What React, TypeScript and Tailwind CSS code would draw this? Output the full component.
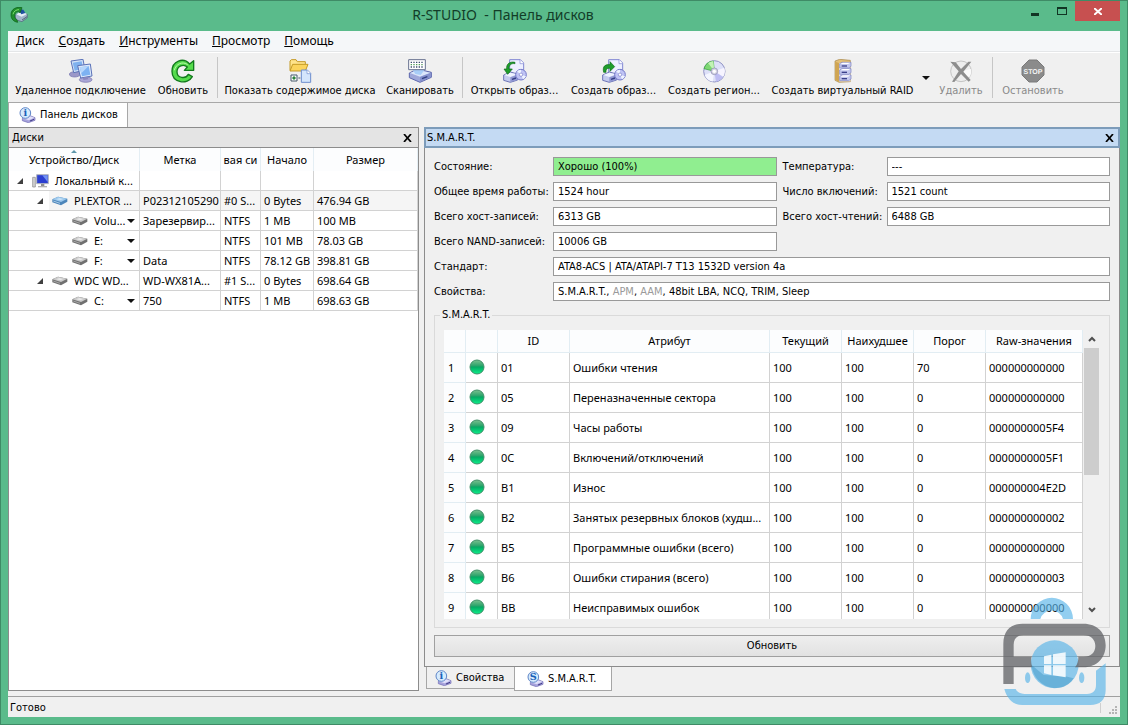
import React from 'react';
import clsx from 'clsx';

type IconProps = { className?: string };

const AppIcon = () => (
  <svg width="18" height="16" viewBox="0 0 54 48" className="shrink-0">
    <path d="M16 24 34 14l18 8v10L36 44 16 38z" fill="#9fb4c8" stroke="#4a6076" strokeWidth="2" />
    <path d="m18 22 17-9 16 8-16 8z" fill="#e4eef6" />
    <path d="m24 6 16 2 6 10-12 4z" fill="#1e4fa0" />
    <path d="M36 2C20-2 2 6 3 24c0 12 8 20 20 22l-2-8c-8-4-10-16-2-22l7-3 4 5z" fill="#1f8f2c" stroke="#0e5c18" strokeWidth="2" />
    <path d="M9 22c2-10 10-14 18-14" stroke="#7fdb6d" strokeWidth="3" fill="none" />
    <path d="m36 39 15-10" stroke="#2c3e50" strokeWidth="2" />
  </svg>
);

const RemoteIcon = ({ className }: IconProps) => (
  <svg width="24" height="24" viewBox="0 0 72 72" className={className}>
    <ellipse cx="17" cy="46" rx="16" ry="8" fill="#9b98c9" stroke="#6f6cab" strokeWidth="2" />
    <ellipse cx="50" cy="62" rx="19" ry="8" fill="#aaa6d6" stroke="#6f6cab" strokeWidth="2" />
    <path d="m6 6 36-5 6 32-34 8z" fill="#d3e3f8" stroke="#5b72b8" strokeWidth="3" />
    <path d="m11 11 27-4 4 22-25 6z" fill="#7fb1ee" />
    <path d="m26 20 38-5 5 36-34 6z" fill="#dce9fb" stroke="#5b72b8" strokeWidth="3" />
    <path d="m32 25 27-4 5 26-25 5z" fill="#7db2f2" />
    <path d="m32 25 27-4-22 22z" fill="#b6d6fb" />
    <path d="m40 56 16-3 2 8-14 2z" fill="#8b88bf" />
  </svg>
);

const RefreshIcon = ({ className }: IconProps) => (
  <svg width="24" height="24" viewBox="0 0 72 72" className={className}>
    <path
      d="M56 15 68 5v29H40l9-10C38 14 18 20 18 38c0 20 26 23 34 8l12 7C50 78 3 73 3 37 3 5 37-6 56 15z"
      fill="#55dc4c"
      stroke="#127a1c"
      strokeWidth="4"
      strokeLinejoin="round"
    />
    <path d="M10 34C14 14 36 6 50 17" stroke="#b4f7a4" strokeWidth="3" fill="none" />
  </svg>
);

const FolderTreeIcon = ({ className }: IconProps) => (
  <svg width="24" height="24" viewBox="0 0 72 72" className={className}>
    <path d="M6 34V6l4-4h14l4 6h24v8" fill="#ffe48a" stroke="#c49a26" strokeWidth="3" />
    <path d="m6 36 8-20h46l-8 20z" fill="#fbd45c" stroke="#c49a26" strokeWidth="3" />
    <path d="M9 48h18v18H9z" fill="#fff" stroke="#44596b" strokeWidth="3" />
    <path d="M18 52v10M13 57h10" stroke="#1b7a2d" strokeWidth="4" />
    <path d="M40 33h18l10 10v27H40z" fill="#d4e6fc" stroke="#6b8dce" strokeWidth="3" />
    <path d="M57 33v11h11" fill="#fff" stroke="#6b8dce" strokeWidth="2" />
    <path d="M31 57h6" stroke="#44596b" strokeWidth="3" />
  </svg>
);

const ScanIcon = ({ className }: IconProps) => (
  <svg width="24" height="24" viewBox="0 0 72 72" className={className}>
    <path d="m4 42 24-12 42 10v15L36 70 4 56z" fill="#9fa8da" stroke="#5c66ac" strokeWidth="3" />
    <path d="m6 42 23-10 38 9-31 12z" fill="#dbe6fa" />
    <path d="M36 54v14l32-13V42z" fill="#8490cd" />
    <path d="m42 59 16-6" stroke="#323f80" strokeWidth="4" />
    <path d="m12 30 38 2-12 16-16-3z" fill="#a8cdf7" />
    <path d="M2 2h50v30H2z" fill="#fff" stroke="#66708e" strokeWidth="3" />
    <path d="M8 10h40" stroke="#3e4d70" strokeWidth="4" strokeDasharray="4 4" />
    <path d="M8 17h40" stroke="#519c59" strokeWidth="4" strokeDasharray="4 4" />
    <path d="M8 24h40" stroke="#3e4d70" strokeWidth="4" strokeDasharray="4 4" />
  </svg>
);

// Shared sheet + drive + disc drawing behind both image arrows
const ImageBase = () => (
  <>
    <path d="M20 2h32l10 10v36H20z" fill="#eef0ff" stroke="#8086d2" strokeWidth="3" />
    <path d="M51 2v12h12" fill="#fff" stroke="#8086d2" strokeWidth="2" />
    <path d="m2 48 20-9 22 6v18L22 70 2 64z" fill="#c4cbee" stroke="#6d74b6" strokeWidth="3" />
    <path d="m4 48 18-7 20 5-20 8z" fill="#eef2ff" />
    <path d="M22 55v14l22-7V47z" fill="#8f97d2" />
    <path d="m27 61 12-4" stroke="#343c84" strokeWidth="4" />
    <circle cx="54" cy="47" r="16" fill="#bfc3f4" stroke="#7479c8" strokeWidth="3" />
    <path d="M54 47 42 37a16 16 0 0 1 12-5zM54 47l15 5a16 16 0 0 1-9 9z" fill="#eef3ff" />
    <circle cx="54" cy="47" r="5" fill="#fff" stroke="#7479c8" strokeWidth="2" />
  </>
);

const OpenImageIcon = ({ className }: IconProps) => (
  <svg width="24" height="24" viewBox="0 0 72 72" className={className}>
    <ImageBase />
    <path d="M36 14C22 12 18 20 18 30h10L14 46 3 30h8C9 16 20 6 36 10z" fill="#1f9d2b" stroke="#0d6b18" strokeWidth="2" />
  </svg>
);

const CreateImageIcon = ({ className }: IconProps) => (
  <svg width="24" height="24" viewBox="0 0 72 72" className={className}>
    <ImageBase />
    <path d="M5 40C0 20 12 16 24 17V8l14 15-14 14v-9c-8-1-13 2-12 12z" fill="#1f9d2b" stroke="#0d6b18" strokeWidth="2" />
  </svg>
);

const RegionIcon = ({ className }: IconProps) => (
  <svg width="24" height="24" viewBox="0 0 72 72" className={className}>
    <circle cx="37" cy="37" r="32" fill="#dde0f8" stroke="#9093c4" strokeWidth="3" />
    <path d="M37 37 67 26a32 32 0 0 1-3 27z" fill="#f6f4ff" />
    <path d="m37 37-5 31a32 32 0 0 1-24-20z" fill="#f4f6ff" />
    <path d="m37 37 26 17a32 32 0 0 1-21 14z" fill="#bdbdf2" />
    <path d="M37 37 6 29A32 32 0 0 1 34 6z" fill="#7ed873" stroke="#2f9a35" strokeWidth="2" />
    <path d="M37 37 18 12a32 32 0 0 1 16-6z" fill="#c2f2b5" />
    <circle cx="37" cy="37" r="10" fill="#d6d6e4" stroke="#8587ac" strokeWidth="2" />
    <circle cx="37" cy="37" r="5" fill="#fff" />
  </svg>
);

const RaidIcon = ({ className }: IconProps) => (
  <svg width="24" height="24" viewBox="0 0 72 72" className={className}>
    <path d="m12 6 14-5 32 3v64l-34 2-12-6z" fill="#e3c078" stroke="#a5854a" strokeWidth="2" />
    <path d="m13 8 11 4v57l-11-6z" fill="#d0a552" />
    <path d="M25 12h33v55H25z" fill="#eceefb" />
    {[14, 33, 52].map((y) => (
      <g key={y}>
        <path d={`M26 ${y}l7-4h27v12l-7 5H26z`} fill="#c3c8ee" stroke="#7a80c0" strokeWidth="2" />
        <path d={`M28 ${y + 1}l7-4h23l-7 4z`} fill="#fff" />
        <path d={`M32 ${y + 7}h16`} stroke="#3b4189" strokeWidth="4" />
      </g>
    ))}
  </svg>
);

const DeleteIcon = ({ className }: IconProps) => (
  <svg width="24" height="24" viewBox="0 0 72 72" className={className}>
    <circle cx="36" cy="37" r="31" fill="#ededed" stroke="#c4c4c4" strokeWidth="3" />
    <path d="M36 37 66 30a31 31 0 0 1-5 25z" fill="#fafafa" />
    <path d="m4 8 16 2 16 20 22-22h9L43 38l22 25-6 5-23-23-20 24-7-1 20-31z" fill="#8d8d8d" />
  </svg>
);

const StopIcon = ({ className }: IconProps) => (
  <svg width="24" height="24" viewBox="0 0 24 24" className={className}>
    <path d="M8 1h8l7 7v8l-7 7H8l-7-7V8z" fill="#8b8b8b" stroke="#7a7a7a" />
    <text x="12" y="15" textAnchor="middle" fontSize="7" fontWeight="bold" fontFamily="Liberation Sans, sans-serif" fill="#f4f4f4" textRendering="geometricPrecision">
      STOP
    </text>
  </svg>
);

const DriveInfoIcon = ({ letter }: { letter: string }) => (
  <svg width="17" height="16" viewBox="0 0 51 48" className="shrink-0">
    <path d="m10 34 18-10 20 8v8L28 47 10 41z" fill="#a7a3dc" stroke="#6f6bb4" strokeWidth="2" />
    <path d="m12 34 17-8 17 6-17 8z" fill="#e0e0fa" />
    <path d="m33 42 12-5" stroke="#3f3a86" strokeWidth="3" />
    <circle cx="19" cy="18" r="16" fill="#d6ebfd" stroke="#5f86c8" strokeWidth="3" />
    <text x="19" y="28" textAnchor="middle" fontSize="29" fontWeight="bold" fontFamily="DejaVu Serif, serif" fill="#1960b8">
      {letter}
    </text>
  </svg>
);

const ComputerIcon = () => (
  <svg width="17" height="14" viewBox="0 0 51 42" className="shrink-0">
    <path d="M2 10h8v29H2z" fill="#d4d4d4" stroke="#848484" strokeWidth="2" />
    <path d="M14 2h35v27H14z" fill="#2b3fd0" stroke="#b2b6be" strokeWidth="3" />
    <path d="M31 4h16v20z" fill="#7292f2" />
    <path d="M27 30h10v6H27z" fill="#909090" />
    <path d="M18 36h27v4H18z" fill="#b0b0b0" />
  </svg>
);

const DriveIcon = ({ blue = false }: { blue?: boolean }) => (
  <svg width="16" height="10" viewBox="0 0 48 30" className="shrink-0">
    <path d="M1 10 18 2l28 6v9L27 28 1 19z" fill={blue ? '#4d86ba' : '#707070'} />
    <path d="M1 10 18 2l28 6-19 10z" fill={blue ? '#9cc8ec' : '#c9c9c9'} />
    <path d="m12 10 10-4 12 3-9 4z" fill={blue ? '#c7e3f8' : '#e9e9e9'} />
    <path d="m4 15 20 7" stroke={blue ? '#a9cbe8' : '#a6a6a6'} strokeWidth="3" />
  </svg>
);

const Expander = () => (
  <svg width="7" height="7" viewBox="0 0 7 7" className="shrink-0">
    <path d="M6 0v6H0z" fill="#404040" />
  </svg>
);

const CaretDown = () => (
  <svg width="8" height="4" viewBox="0 0 8 4" className="shrink-0">
    <path d="M0 0h8L4 4z" fill="#111" />
  </svg>
);

const CloseGlyph = () => (
  <svg width="9" height="8" viewBox="0 0 9 8">
    <path d="m1 0 7 8M8 0 1 8" stroke="#000" strokeWidth="1.7" />
  </svg>
);

const Led = () => (
  <svg width="16" height="16" viewBox="0 0 16 16" className="block">
    <defs>
      <linearGradient id="led" x1="0" y1="0" x2="0" y2="1">
        <stop offset="0" stopColor="#7cc08f" />
        <stop offset="0.42" stopColor="#2ba46b" />
        <stop offset="0.5" stopColor="#04a962" />
        <stop offset="1" stopColor="#0df08a" />
      </linearGradient>
    </defs>
    <circle cx="8" cy="8" r="7" fill="url(#led)" stroke="#3f8f68" />
  </svg>
);

const MENU = [
  ['Д', 'иск'],
  ['С', 'оздать'],
  ['И', 'нструменты'],
  ['П', 'росмотр'],
  ['П', 'омощь'],
];

const TREE = [
  { level: 0, name: 'Локальный к...', label: '', fs: '', start: '', size: '' },
  { level: 1, name: 'PLEXTOR ...', label: 'P02312105290', fs: '#0 S...', start: '0 Bytes', size: '476.94 GB', selected: true },
  { level: 2, name: 'Volu...', label: 'Зарезервир...', fs: 'NTFS', start: '1 MB', size: '100 MB' },
  { level: 2, name: 'E:', label: '', fs: 'NTFS', start: '101 MB', size: '78.03 GB' },
  { level: 2, name: 'F:', label: 'Data', fs: 'NTFS', start: '78.12 GB', size: '398.81 GB' },
  { level: 1, name: 'WDC WD...', label: 'WD-WX81A...', fs: '#1 S...', start: '0 Bytes', size: '698.64 GB' },
  { level: 2, name: 'C:', label: '750', fs: 'NTFS', start: '1 MB', size: '698.63 GB' },
];

const ATTRIBUTES = [
  ['01', 'Ошибки чтения', '100', '100', '70', '000000000000'],
  ['05', 'Переназначенные сектора', '100', '100', '0', '000000000000'],
  ['09', 'Часы работы', '100', '100', '0', '0000000005F4'],
  ['0C', 'Включений/отключений', '100', '100', '0', '0000000005F1'],
  ['B1', 'Износ', '100', '100', '0', '000000004E2D'],
  ['B2', 'Занятых резервных блоков (худш...', '100', '100', '0', '000000000002'],
  ['B5', 'Программные ошибки (всего)', '100', '100', '0', '000000000000'],
  ['B6', 'Ошибки стирания (всего)', '100', '100', '0', '000000000003'],
  ['BB', 'Неисправимых ошибок', '100', '100', '0', '000000000000'],
];

type ToolProps = {
  icon: React.ComponentType<IconProps>;
  label: string;
  width: string;
  disabled?: boolean;
};

const Tool: React.FC<ToolProps> = ({ icon: Icon, label, width, disabled }) => (
  <button
    disabled={disabled}
    className={clsx('flex shrink-0 flex-col items-center whitespace-nowrap pt-[6px]', width, disabled ? 'text-[#8a8a8a]' : 'text-black')}
  >
    <Icon />
    <span className="leading-4">{label}</span>
  </button>
);

const ToolSeparator = () => <div className="mx-[2px] my-1 w-px shrink-0 bg-[#c6c6c6]" />;

const TitleBar = () => (
  <header className="flex h-[30px] shrink-0 items-start pl-[9px] pr-[7px]">
    <div className="flex flex-1 items-center pt-1.5">
      <AppIcon />
      <h1 className="flex-1 whitespace-pre text-center font-['Noto_Sans','Open_Sans',sans-serif] text-[14px] leading-4 text-[#123d28]">
        R-STUDIO  - Панель дисков
      </h1>
    </div>
    <div className="flex w-[142px] justify-end">
      <button aria-label="Свернуть" className="flex h-5 w-[27px] items-center justify-center">
        <span className="mt-1.5 h-[3px] w-2 bg-[#123524]" />
      </button>
      <button aria-label="Развернуть" className="flex h-5 w-[27px] items-center justify-center">
        <span className="h-2 w-2.5 border border-t-2 border-[#123524]" />
      </button>
      <button aria-label="Закрыть" className="flex h-5 w-[45px] items-center justify-center bg-[#c75050]">
        <svg width="8" height="7" viewBox="0 0 8 7">
          <path d="m0 0 8 7M8 0 0 7" stroke="#fff" strokeWidth="2" />
        </svg>
      </button>
    </div>
  </header>
);

const Toolbar = () => (
  <div className="flex h-[51px] shrink-0 overflow-hidden border-b border-[#a8a8a8] border-t border-t-white pl-[2px]">
    <Tool icon={RemoteIcon} label="Удаленное подключение" width="w-[141px]" />
    <Tool icon={RefreshIcon} label="Обновить" width="w-[64px]" />
    <ToolSeparator />
    <Tool icon={FolderTreeIcon} label="Показать содержимое диска" width="w-[160px]" />
    <Tool icon={ScanIcon} label="Сканировать" width="w-[80px]" />
    <ToolSeparator />
    <Tool icon={OpenImageIcon} label="Открыть образ..." width="w-[99px]" />
    <Tool icon={CreateImageIcon} label="Создать образ..." width="w-[99px]" />
    <Tool icon={RegionIcon} label="Создать регион..." width="w-[102px]" />
    <Tool icon={RaidIcon} label="Создать виртуальный RAID" width="w-[155px]" />
    <button aria-label="Другие типы RAID" className="flex w-3 shrink-0 items-center justify-center">
      <CaretDown />
    </button>
    <Tool icon={DeleteIcon} label="Удалить" width="w-[58px]" disabled />
    <ToolSeparator />
    <Tool icon={StopIcon} label="Остановить" width="w-[76px]" disabled />
  </div>
);

const treeHead = 'relative h-[23px] border-r border-[#e4eef4] bg-[#fcfdfe] p-0 text-center font-normal';
const treeCell = 'h-5 overflow-hidden whitespace-nowrap border-b border-r border-[#d2d2d2] pb-0 pl-[3px] pr-0 pt-px';

const DisksPanel = () => (
  <section className="flex w-[411px] shrink-0 flex-col border border-[#8c8c8c] bg-white">
    <div className="flex h-5 shrink-0 items-center justify-between border-b border-[#8c8c8c] bg-[#e4e4e4] pl-[3px] pr-[6px]">
      <h2>Диски</h2>
      <button aria-label="Закрыть панель">
        <CloseGlyph />
      </button>
    </div>
    <table className="w-full table-fixed border-separate border-spacing-0 font-['Noto_Sans','Open_Sans',sans-serif] text-[11px] leading-4">
      <colgroup>
        <col className="w-[131px]" />
        <col className="w-[81px]" />
        <col className="w-[40px]" />
        <col className="w-[53px]" />
        <col />
      </colgroup>
      <thead>
        <tr>
          <th className={treeHead}>
            <svg width="6" height="3" viewBox="0 0 6 3" className="absolute left-[62px] top-[2px]">
              <path d="M3 0l3 3H0z" fill="#5f97ab" />
            </svg>
            Устройство/Диск
          </th>
          <th className={treeHead}>Метка</th>
          <th className={clsx(treeHead, 'overflow-hidden whitespace-nowrap')}>вая си</th>
          <th className={treeHead}>Начало</th>
          <th className={treeHead}>Размер</th>
        </tr>
      </thead>
      <tbody>
        {TREE.map((row) => (
          <tr key={row.name} className={clsx(row.selected && 'bg-[linear-gradient(to_right,white_40px,#f5f5f5_40px)]')}>
            <td className="h-5 border-b border-r border-[#d2d2d2] p-0">
              <div
                className={clsx(
                  'flex h-[19px] items-center whitespace-nowrap pr-1 pt-px',
                  row.level === 0 && 'gap-2 pl-2',
                  row.level === 1 && 'gap-2 pl-7',
                  row.level === 2 && 'gap-1.5 pl-[63px]',
                )}
              >
                {row.level < 2 && <Expander />}
                {row.level === 0 ? <ComputerIcon /> : <DriveIcon blue={row.selected} />}
                <span className={clsx(row.level < 2 && '-ml-[2px]')}>{row.name}</span>
                {row.level === 2 && (
                  <button aria-label={`Меню ${row.name}`} className="-ml-2 flex flex-1 justify-end">
                    <CaretDown />
                  </button>
                )}
              </div>
            </td>
            <td className={treeCell}>{row.label}</td>
            <td className={treeCell}>{row.fs}</td>
            <td className={treeCell}>{row.start}</td>
            <td className={treeCell}>{row.size}</td>
          </tr>
        ))}
      </tbody>
    </table>
  </section>
);

type FieldProps = { id: string; label: string; value: string; good?: boolean; wide?: boolean; second?: boolean };

const Field: React.FC<FieldProps> = ({ id, label, value, good, wide, second }) => (
  <>
    <label htmlFor={id} className={clsx('whitespace-nowrap leading-[20px]', second && 'pl-[6px]')}>
      {label}
    </label>
    <input
      id={id}
      readOnly
      defaultValue={value}
      className={clsx('h-[19px] w-full min-w-0 border border-[#999] px-1', good ? 'bg-[#90ee90]' : 'bg-white', wide && 'col-span-3')}
    />
  </>
);

const smartHead = 'h-[23px] border-b border-r border-[#e2edf3] bg-[#fcfdfe] p-0 text-center font-normal';
const smartCell = 'h-[30px] overflow-hidden whitespace-nowrap border-b border-r border-[#d2d2d2] bg-white py-0 pl-[3px] pr-0';

const SmartTable = () => (
  <div className="flex min-h-0 flex-1">
    <div className="min-w-0 flex-1 overflow-hidden">
      <table className="w-full table-fixed border-separate border-spacing-0 font-['Noto_Sans','Open_Sans',sans-serif] text-[11px] leading-4">
        <colgroup>
          <col className="w-[22px]" />
          <col className="w-[32px]" />
          <col className="w-[72px]" />
          <col />
          <col className="w-[72px]" />
          <col className="w-[72px]" />
          <col className="w-[72px]" />
          <col className="w-[97px]" />
        </colgroup>
        <thead>
          <tr>
            <th className={smartHead} />
            <th className={smartHead} />
            <th className={smartHead}>ID</th>
            <th className={smartHead}>Атрибут</th>
            <th className={smartHead}>Текущий</th>
            <th className={smartHead}>Наихудшее</th>
            <th className={smartHead}>Порог</th>
            <th className={smartHead}>Raw-значения</th>
          </tr>
        </thead>
        <tbody>
          {ATTRIBUTES.map((row, index) => (
            <tr key={row[0]}>
              <td className="border-b border-r border-[#e2edf3] bg-[#fcfdfe] py-0 pl-1 pr-0">{index + 1}</td>
              <td className="border-b border-r border-[#d2d2d2] bg-white pb-0.5 pl-[3px] pr-0 pt-0">
                <Led />
              </td>
              {row.map((value, i) => (
                <td key={i} className={smartCell}>
                  {value}
                </td>
              ))}
            </tr>
          ))}
        </tbody>
      </table>
    </div>
    <div className="flex w-[17px] shrink-0 flex-col items-center bg-[#f0f0f0] pl-px">
      <button aria-label="Прокрутить вверх" className="flex h-[18px] w-full shrink-0 items-center justify-center">
        <svg width="8" height="6" viewBox="0 0 8 6">
          <path d="m1 5 3-3 3 3" stroke="#505050" strokeWidth="2" fill="none" />
        </svg>
      </button>
      <div className="min-h-0 w-full flex-1">
        <div className="h-1/2 w-[15px] bg-[#cdcdcd]" />
      </div>
      <button aria-label="Прокрутить вниз" className="flex h-[18px] w-full shrink-0 items-center justify-center">
        <svg width="8" height="6" viewBox="0 0 8 6">
          <path d="m1 1 3 3 3-3" stroke="#505050" strokeWidth="2" fill="none" />
        </svg>
      </button>
    </div>
  </div>
);

const SmartPanel = () => (
  <section className="flex min-w-0 flex-1 flex-col">
    <div className="flex min-h-0 flex-1 flex-col border border-t-0 border-[#8c8c8c]">
      <div className="-mx-px flex h-[21px] shrink-0 items-center justify-between border-2 border-[#7d9cba] bg-[#c4daf3] pl-px pr-1">
        <h2>S.M.A.R.T.</h2>
        <button aria-label="Закрыть панель">
          <CloseGlyph />
        </button>
      </div>
      <div className="flex min-h-0 flex-1 flex-col px-[9px] pb-[9px] pt-[9px]">
        <div className="grid grid-cols-[119px_1fr_110px_1fr] gap-y-[5px]">
          <Field id="state" label="Состояние:" value="Хорошо (100%)" good />
          <Field id="temp" label="Температура:" value="---" second />
          <Field id="hours" label="Общее время работы:" value="1524 hour" />
          <Field id="power" label="Число включений:" value="1521 count" second />
          <Field id="writes" label="Всего хост-записей:" value="6313 GB" />
          <Field id="reads" label="Всего хост-чтений:" value="6488 GB" second />
          <Field id="nand" label="Всего NAND-записей:" value="10006 GB" />
          <span className="col-span-2" />
          <Field id="standard" label="Стандарт:" value="ATA8-ACS | ATA/ATAPI-7 T13 1532D version 4a" wide />
          <span className="leading-[20px]">Свойства:</span>
          <div className="col-span-3 h-[19px] truncate border border-[#999] bg-white px-1 leading-[18px]">
            S.M.A.R.T., <span className="text-[#9a9a9a]">APM</span>, <span className="text-[#9a9a9a]">AAM</span>, 48bit LBA, NCQ, TRIM, Sleep
          </div>
        </div>
        <fieldset className="mt-[5px] flex min-h-0 min-w-0 flex-1 flex-col border border-[#dadada] px-[9px] pb-2 pt-[7px]">
          <legend className="ml-[-4px] px-[2px] leading-4">S.M.A.R.T.</legend>
          <SmartTable />
        </fieldset>
        <button className="mt-[7px] h-[22px] shrink-0 border border-[#a0a0a0] bg-linear-to-b from-[#eeeeee] to-[#e2e2e2]">Обновить</button>
      </div>
    </div>
    <div role="tablist" className="flex h-6 shrink-0 items-start pl-[2px]">
      <button role="tab" aria-selected="false" className="flex h-[22px] w-[88px] items-center gap-1 border border-r-0 border-t-0 border-[#a6a6a6] pl-2">
        <DriveInfoIcon letter="i" />
        Свойства
      </button>
      <button role="tab" aria-selected="true" className="flex h-6 w-[98px] items-center gap-1 border border-t-0 border-[#a6a6a6] bg-white pl-3">
        <DriveInfoIcon letter="S" />
        S.M.A.R.T.
      </button>
    </div>
  </section>
);

const Watermark = () => (
  <svg width="110" height="113" viewBox="120 30 330 339" className="pointer-events-none absolute bottom-4 right-4" aria-hidden="true">
    <g fill="#58b4e8" fillOpacity="0.65">
      <path d="M209 102a63 63 0 0 1 127 0h-30a35 33 0 0 0-68 0z" />
      <path d="M130 312h34c5 10 14 15 26 15h188c18 0 27-11 27-27v-43l29-22v80c0 30-18 45-46 45H184c-26 0-45-16-54-48z" />
      <ellipse cx="200" cy="278" rx="8" ry="16" />
      <ellipse cx="362" cy="278" rx="8" ry="16" />
      <circle cx="281" cy="238" r="72" />
    </g>
    <path
      d="M127 297V176c0-38 22-60 58-60h182c42 0 67 27 67 65s-27 66-66 66h-26c8-10 10-20 10-32h16c22 0 35-13 35-32s-14-33-36-33H188c-19 0-30 11-30 29v36h54c-3 10-2 22 2 32h-56v50z"
      fill="#65676a"
      fillOpacity="0.78"
    />
    <path d="m212 240 36 30 65 4 25 6c-18 30-54 36-84 22-24-12-40-34-42-62z" fill="#318fbd" fillOpacity="0.4" />
    <path d="m249 214 22-5v28h-22zM276 208l38-6v35h-38zM249 241h22v29l-22-5zM276 241h38v36l-38-6z" fill="#fff" fillOpacity="0.85" />
  </svg>
);

const SizeGrip = () => (
  <svg width="9" height="9" viewBox="0 0 9 9" className="mb-[2px] self-end">
    <path d="M6 0h2v2H6zM3 3h2v2H3zM6 3h2v2H6zM0 6h2v2H0zM3 6h2v2H3zM6 6h2v2H6z" fill="#b4b4b4" />
  </svg>
);

export default function App() {
  return (
    <div className="relative flex h-screen flex-col overflow-hidden border border-[#3f8b66] bg-[#5abb8b] font-['DejaVu_Sans_Condensed','DejaVu_Sans',sans-serif] text-[11px] leading-4 text-black">
      <TitleBar />
      <div className="mx-[7px] mb-[7px] flex min-h-0 flex-1 flex-col bg-[#f0f0f0]">
        <nav className="flex h-[21px] shrink-0 items-center gap-[14px] border-b border-[#e4e6e8] bg-[#f5f7f9] pl-2 font-['Noto_Sans','Open_Sans',sans-serif] text-[12px]">
          {MENU.map(([key, rest]) => (
            <button key={rest} className="whitespace-nowrap">
              <u>{key}</u>
              {rest}
            </button>
          ))}
        </nav>
        <Toolbar />
        <div role="tablist" className="flex h-6 shrink-0 items-end">
          <button role="tab" aria-selected="true" className="flex h-6 w-[120px] items-center gap-1 border-x border-[#a8a8a8] bg-white pl-[10px]">
            <DriveInfoIcon letter="i" />
            Панель дисков
          </button>
        </div>
        <main className="flex min-h-0 flex-1 gap-[5px] pb-[5px]">
          <DisksPanel />
          <SmartPanel />
        </main>
        <footer className="flex h-[21px] shrink-0 items-center justify-between border-t border-[#a0a0a0] pl-[2px] pr-[2px] pt-px">
          <span>Готово</span>
          <div className="flex h-full items-center gap-2">
            <span className="h-2.5 w-px bg-[#cfcfcf]" />
            <SizeGrip />
          </div>
        </footer>
      </div>
      <Watermark />
    </div>
  );
}
